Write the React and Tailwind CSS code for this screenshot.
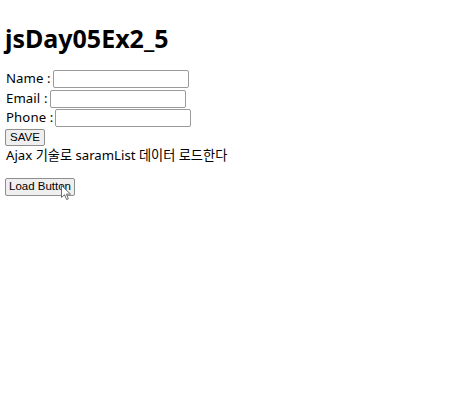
export default function App() {
  const body = "font-['Noto_Sans','Noto_Sans_CJK_KR',sans-serif]";
  const btn =
    "font-['Liberation_Sans',Arial,sans-serif] text-[11.5px] leading-none text-black bg-[#efefef] border border-[#8f8f8f] rounded-[2px] flex items-center justify-center";
  const inp = "h-[18px] w-[136px] border border-[#9a9a9a] rounded-[2px] bg-white";
  return (
    <div className={`relative min-h-[395px] w-[474px] bg-white text-black pl-[5px] pt-[22px] ${body}`}>
      <h1 className="text-[25px] font-bold leading-[32px] tracking-[0px]">jsDay05Ex2_5</h1>
      <div className="mt-[16px] text-[13.2px] leading-none">
        <div className="flex items-center h-[18px]">
          <span className="ml-[1px] tracking-[0.1px]">Name :</span>
          <div className={`${inp} ml-[2px]`} />
        </div>
        <div className="flex items-center h-[18px] mt-[2px]">
          <span className="ml-[1px] tracking-[0.1px]">Email :</span>
          <div className={`${inp} ml-[2px]`} />
        </div>
        <div className="flex items-center h-[18px] mt-[1px]">
          <span className="ml-[1px] tracking-[0.1px]">Phone :</span>
          <div className={`${inp} ml-[2px]`} />
        </div>
        <div className={`${btn} mt-[2px] w-[40px] h-[17px]`}>SAVE</div>
        <div className="h-[17px] flex items-center ml-[1px] mt-[1px]">
          Ajax 기술로 saramList 데이터 로드한다
        </div>
        <div className={`${btn} mt-[14px] w-[70px] h-[18px]`}>Load Button</div>
      </div>
      <svg
        className="absolute left-[61px] top-[185px]"
        width="11"
        height="16"
        viewBox="0 0 11 16"
      >
        <path
          d="M0.5 0.5 L0.5 12.5 L3.5 9.7 L5.6 14.6 L7.4 13.8 L5.4 9.1 L9.5 9.1 Z"
          fill="#ffffff"
          stroke="#6b6b6b"
          strokeWidth="1"
          strokeLinejoin="round"
        />
      </svg>
    </div>
  );
}
